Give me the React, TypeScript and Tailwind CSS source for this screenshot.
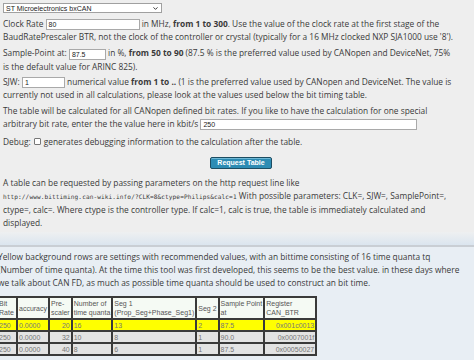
import { ChevronDown } from "lucide-react"

const rows = [
  { rate: "250", acc: "0.0000", pre: "20", tq: "16", seg1: "13", seg2: "2", sp: "87.5", btr: "0x001c0013", hi: true },
  { rate: "250", acc: "0.0000", pre: "32", tq: "10", seg1: "8", seg2: "1", sp: "90.0", btr: "0x0007001f", hi: false },
  { rate: "250", acc: "0.0000", pre: "40", tq: "8", seg1: "6", seg2: "1", sp: "87.5", btr: "0x00050027", hi: false },
]

function Field({ value, width }: { value: string; width: string }) {
  return (
    <span
      className={`inline-block align-middle h-[11px] ${width} bg-white border border-[#a9a9a9] px-[2px] text-[7px] leading-[9px] font-['Liberation_Sans',sans-serif] text-[#222]`}
    >
      {value}
    </span>
  )
}

export default function App() {
  return (
    <div className="w-[474px] h-[360px] overflow-hidden bg-[#eeeeee] text-[#3a3a3a] font-['Open_Sans',sans-serif] text-[8.35px] leading-[13px] whitespace-nowrap">
      {/* form area */}
      <div className="px-[3px] pt-[3px]">
        <div className="flex items-center justify-between w-[159px] h-[10px] bg-white border border-[#a0a0a0] px-[2px] font-['Liberation_Sans',sans-serif] text-[7px] text-[#222]">
          <span>ST Microelectronics bxCAN</span>
          <ChevronDown className="w-[7px] h-[7px]" strokeWidth={3} />
        </div>

        <p className="mt-[4px]">
          Clock Rate <Field value="80" width="w-[94px]" /> in MHz, <b>from 1 to 300</b>. Use the value of the clock rate at the first stage of the
          <br />
          BaudRatePrescaler BTR, not the clock of the controller or crystal (typically for a 16 MHz clocked NXP SJA1000 use '8').
        </p>

        <p className="mt-[3px]">
          Sample-Point at: <Field value="87.5" width="w-[37px]" /> in %, <b>from 50 to 90</b> (87.5 % is the preferred value used by CANopen and DeviceNet, 75%
          <br />
          is the default value for ARINC 825).
        </p>

        <p className="mt-[2px]">
          SJW: <Field value="1" width="w-[43px]" /> numerical value <b>from 1 to ..</b> (1 is the preferred value used by CANopen and DeviceNet. The value is
          <br />
          currently not used in all calculations, please look at the values used below the bit timing table.
        </p>

        <p className="mt-[3px]">
          The table will be calculated for all CANopen defined bit rates. If you like to have the calculation for one special
          <br />
          arbitrary bit rate, enter the the value here in kbit/s <Field value="250" width="w-[217px]" />
        </p>

        <p className="mt-[5px] flex items-center gap-[3px]">
          Debug:
          <span className="inline-block w-[7px] h-[7px] border border-[#777] rounded-[1px] bg-white" />
          generates debugging information to the calculation after the table.
        </p>

        <div className="flex justify-center mt-[9px] pl-[8px]">
          <button className="h-[12px] px-[6px] rounded-[2px] border border-[#1d4d62] bg-[#2d8cb4] text-white font-['Liberation_Sans',sans-serif] font-bold text-[7px] leading-[10px] shadow-[inset_0_1px_0_#6fb8d6]">
            Request Table
          </button>
        </div>

        <p className="mt-[7px]">
          A table can be requested by passing parameters on the http request line like
          <br />
          <span className="font-['DejaVu_Sans_Mono',monospace] text-[6.1px] tracking-[0.1px]">
            http://www.bittiming.can-wiki.info/?CLK=8&amp;ctype=Philips&amp;calc=1
          </span>{" "}
          With possible parameters: CLK=, SJW=, SamplePoint=,
          <br />
          ctype=, calc=. Where ctype is the controller type. If calc=1, calc is true, the table is immediately calculated and
          <br />
          displayed.
        </p>
      </div>

      {/* divider band */}
      <div className="mt-[3px] h-[13px] bg-gradient-to-b from-[#eef0f1] to-[#dbe5ef]" />
      <div className="h-[2px] bg-[#c9ced4]" />

      {/* results area */}
      <div className="bg-[#e8eef4] h-full -ml-[2px] pt-[3px]">
        <p>
          Yellow background rows are settings with recommended values, with an bittime consisting of 16 time quanta tq
          <br />
          (Number of time quanta). At the time this tool was first developed, this seems to be the best value. in these days where
          <br />
          we talk about CAN FD, as much as possible time quanta should be used to construct an bit time.
        </p>

        <table className="mt-[7px] -ml-[2px] table-fixed border-collapse font-['Liberation_Sans',sans-serif] text-[7px] leading-[9px]">
          <colgroup>
            <col className="w-[20px]" />
            <col className="w-[31px]" />
            <col className="w-[21px]" />
            <col className="w-[38px]" />
            <col className="w-[82px]" />
            <col className="w-[20px]" />
            <col className="w-[38px]" />
            <col className="w-[52px]" />
          </colgroup>
          <thead>
            <tr className="bg-[#f5faf4] text-[#555] align-top text-left">
              <th className="font-normal border-2 border-[#3a3a3a] px-[1px] py-[1px]">Bit<br />Rate</th>
              <th className="font-normal border-2 border-[#3a3a3a] px-[1px] align-middle">accuracy</th>
              <th className="font-normal border-2 border-[#3a3a3a] px-[1px] py-[1px]">Pre-<br />scaler</th>
              <th className="font-normal border-2 border-[#3a3a3a] px-[1px] py-[1px]">Number of<br />time quanta</th>
              <th className="font-normal border-2 border-[#3a3a3a] px-[1px] py-[1px]">Seg 1<br />(Prop_Seg+Phase_Seg1)</th>
              <th className="font-normal border-2 border-[#3a3a3a] px-[1px] align-middle">Seg 2</th>
              <th className="font-normal border-2 border-[#3a3a3a] px-[1px] py-[1px]">Sample Point<br />at</th>
              <th className="font-normal border-2 border-[#3a3a3a] px-[1px] py-[1px]">Register<br />CAN_BTR</th>
            </tr>
          </thead>
          <tbody className="text-[#777]">
            {rows.map((r, i) => (
              <tr key={i} className={r.hi ? "bg-[#ffff00]" : "bg-[#e3e3e3]"}>
                <td className="border-2 border-[#3a3a3a] px-[1px] h-[12px]">{r.rate}</td>
                <td className="border-2 border-[#3a3a3a] px-[1px]">{r.acc}</td>
                <td className="border-2 border-[#3a3a3a] px-[1px] text-right">{r.pre}</td>
                <td className="border-2 border-[#3a3a3a] px-[1px]">{r.tq}</td>
                <td className="border-2 border-[#3a3a3a] px-[1px]">{r.seg1}</td>
                <td className="border-2 border-[#3a3a3a] px-[1px]">{r.seg2}</td>
                <td className="border-2 border-[#3a3a3a] px-[1px]">{r.sp}</td>
                <td className="border-2 border-[#3a3a3a] px-[1px] text-right">{r.btr}</td>
              </tr>
            ))}
          </tbody>
        </table>
      </div>
    </div>
  )
}
